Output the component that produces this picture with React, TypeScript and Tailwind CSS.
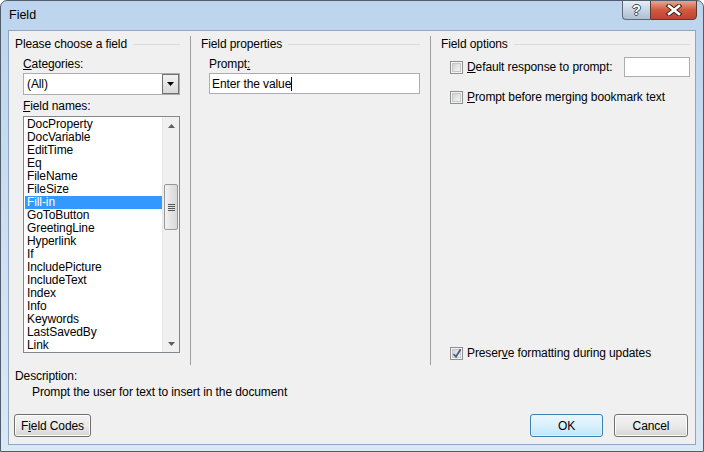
import React from "react"

const fieldNames = [
  "DocProperty",
  "DocVariable",
  "EditTime",
  "Eq",
  "FileName",
  "FileSize",
  "Fill-in",
  "GoToButton",
  "GreetingLine",
  "Hyperlink",
  "If",
  "IncludePicture",
  "IncludeText",
  "Index",
  "Info",
  "Keywords",
  "LastSavedBy",
  "Link",
]

function GroupHeading({ title }: { title: string }) {
  return (
    <div className="flex h-[16px] items-center gap-[6px]">
      <span className="whitespace-nowrap">{title}</span>
      <div className="h-px flex-1 bg-[#dcdcdc]" />
    </div>
  )
}

function CheckBox({ checked = false }: { checked?: boolean }) {
  return (
    <div className="flex h-[13px] w-[13px] shrink-0 items-center justify-center border border-[#8e8f8f] bg-[#f4f4f4]">
      <div className="relative h-[9px] w-[9px] border border-[#c6c6c6] bg-gradient-to-br from-[#d3d3d3] to-[#f6f6f6]">
        {checked && (
          <svg className="absolute left-[-1px] top-[-2px]" width="10" height="11" viewBox="0 0 10 11">
            <path d="M1.5 6 L4 8.8 L8.6 1.2" fill="none" stroke="#4a5c8a" strokeWidth="1.8" />
          </svg>
        )}
      </div>
    </div>
  )
}

function Button({ label, isDefault = false, width }: { label: React.ReactNode; isDefault?: boolean; width: string }) {
  return (
    <div
      className={
        "flex h-[23px] items-center justify-center rounded-[3px] border " +
        width +
        (isDefault
          ? " border-[#3c7fb1] bg-gradient-to-b from-[#eaf6fd] via-[#d9f0fc] to-[#bee6fd] shadow-[inset_0_0_0_1px_#e3f4fc]"
          : " border-[#707070] bg-gradient-to-b from-[#f2f2f2] via-[#ebebeb] to-[#d6d6d6] shadow-[inset_0_0_0_1px_#fcfcfc]")
      }
    >
      {label}
    </div>
  )
}

function ScrollArrow({ up }: { up?: boolean }) {
  return (
    <div className="flex h-[17px] items-center justify-center">
      <svg width="7" height="4" viewBox="0 0 7 4">
        <path d={up ? "M0 4 L3.5 0 L7 4 Z" : "M0 0 L3.5 4 L7 0 Z"} fill="#606060" />
      </svg>
    </div>
  )
}

export default function App() {
  return (
    <div
      className="relative h-[452px] w-[704px] overflow-hidden rounded-t-[7px] border border-[#4f5d6c] bg-gradient-to-b from-[#bcd4ed] via-[#cddff2] to-[#dbe8f5] text-[12px] tracking-[-0.1px] text-black"
      style={{ fontFamily: '"Liberation Sans", Arial, sans-serif' }}
    >
      {/* title bar */}
      <div className="flex h-[29px] items-center pl-[8px]">
        <span className="text-[12.5px] tracking-normal">Field</span>
      </div>
      <div className="absolute right-[6px] top-[-1px] flex h-[20px]">
        <div className="flex w-[28px] items-center justify-center rounded-bl-[4px] border border-r-0 border-[#5b6b7d] bg-gradient-to-b from-[#e6edf5] via-[#c9d6e4] to-[#aebfd2]">
          <span className="text-[14px] font-bold leading-none text-white [text-shadow:1px_0_0_#3b4858,-1px_0_0_#3b4858,0_1px_0_#3b4858,0_-1px_0_#3b4858]">
            ?
          </span>
        </div>
        <div className="flex w-[47px] items-center justify-center rounded-br-[4px] border border-[#5b3a34] bg-gradient-to-b from-[#e8a493] via-[#d2583f] to-[#c0442f]">
          <svg width="18" height="12" viewBox="0 0 18 12">
            <path d="M4 2 L14 10 M14 2 L4 10" stroke="#3a2522" strokeWidth="4.6" strokeLinecap="square" />
            <path d="M4 2 L14 10 M14 2 L4 10" stroke="#ffffff" strokeWidth="2.6" strokeLinecap="square" />
          </svg>
        </div>
      </div>

      {/* client area */}
      <div className="mx-[7px] flex h-[415px] flex-col border border-[#8ea6c0] bg-[#f0f0f0]">
        <div className="mt-[5px] flex h-[329px]">
          {/* column 1 */}
          <div className="flex w-[181px] flex-col pl-[6px] pr-[10px]">
            <GroupHeading title="Please choose a field" />
            <div className="flex flex-col pl-[8px]">
              <div className="mt-[4px] h-[16px] leading-[16px]">
                <span className="underline">C</span>ategories:
              </div>
              <div className="mt-[1px] flex h-[22px] items-stretch border border-[#abadb3] bg-white">
                <div className="flex flex-1 items-center pl-[3px]">(All)</div>
                <div className="flex w-[17px] items-center justify-center border border-[#707070] bg-gradient-to-b from-[#f3f3f3] to-[#d9d9d9]">
                  <svg width="7" height="4" viewBox="0 0 7 4">
                    <path d="M0 0 L3.5 4 L7 0 Z" fill="#000" />
                  </svg>
                </div>
              </div>
              <div className="mt-[3px] h-[16px] leading-[16px]">
                <span className="underline">F</span>ield names:
              </div>
              <div className="mt-[2px] flex h-[237px] border border-[#828790] bg-white">
                <div className="flex flex-1 flex-col pl-[1px] pt-[1px]">
                  {fieldNames.map((name) => (
                    <div
                      key={name}
                      className={
                        "h-[13px] pl-[2px] leading-[13px] " +
                        (name === "Fill-in" ? "bg-[#3399ff] text-white" : "")
                      }
                    >
                      {name}
                    </div>
                  ))}
                </div>
                <div className="flex w-[17px] flex-col border-l border-[#e6e6e6] bg-[#f0f0f0]">
                  <ScrollArrow up />
                  <div className="h-[50px]" />
                  <div className="mx-[1px] flex h-[46px] flex-col items-center justify-center gap-[1px] rounded-[2px] border border-[#979797] bg-gradient-to-r from-[#f3f3f3] via-[#e4e4e4] to-[#d8d8d8]">
                    <div className="h-px w-[7px] bg-[#555]" />
                    <div className="h-px w-[7px] bg-[#555]" />
                    <div className="h-px w-[7px] bg-[#555]" />
                    <div className="h-px w-[7px] bg-[#555]" />
                  </div>
                  <div className="flex-1" />
                  <ScrollArrow />
                </div>
              </div>
            </div>
          </div>

          {/* column 2 */}
          <div className="flex w-[240px] flex-col border-l border-[#a0a0a0] pl-[10px] pr-[10px]">
            <GroupHeading title="Field properties" />
            <div className="flex flex-col pl-[8px]">
              <div className="mt-[4px] h-[16px] leading-[16px]">
                Prompt<span className="underline">:</span>
              </div>
              <div className="mt-[1px] flex h-[21px] items-center border border-[#abadb3] bg-white pl-[2px]">
                <span>Enter the value</span>
                <div className="h-[14px] w-px bg-black" />
              </div>
            </div>
          </div>

          {/* column 3 */}
          <div className="flex flex-1 flex-col border-l border-[#a0a0a0] pl-[10px] pr-[5px]">
            <GroupHeading title="Field options" />
            <div className="mt-[5px] flex h-[20px] items-start pl-[9px]">
              <div className="mt-[2px] flex items-center gap-[4px]">
                <CheckBox />
                <span className="h-[16px] leading-[16px]">
                  <span className="underline">D</span>efault response to prompt:
                </span>
              </div>
              <div className="ml-auto h-[20px] w-[66px] border border-[#abadb3] bg-white" />
            </div>
            <div className="mt-[12px] flex h-[16px] items-center gap-[4px] pl-[9px]">
              <CheckBox />
              <span>
                <span className="underline">P</span>rompt before merging bookmark text
              </span>
            </div>
            <div className="mb-[4px] mt-auto flex h-[16px] items-center gap-[4px] pl-[9px]">
              <CheckBox checked />
              <span>
                Preser<span className="underline">v</span>e formatting during updates
              </span>
            </div>
          </div>
        </div>

        {/* description */}
        <div className="mt-[3px] h-[16px] pl-[6px] leading-[16px]">Description:</div>
        <div className="h-[16px] pl-[23px] leading-[16px]">Prompt the user for text to insert in the document</div>

        {/* buttons */}
        <div className="mt-[14px] flex pl-[5px] pr-[7px]">
          <Button
            width="w-[77px]"
            label={
              <span>
                F<span className="underline">i</span>eld Codes
              </span>
            }
          />
          <div className="flex-1" />
          <Button width="w-[73px]" label="OK" isDefault />
          <div className="w-[11px]" />
          <Button width="w-[74px]" label="Cancel" />
        </div>
      </div>
    </div>
  )
}
